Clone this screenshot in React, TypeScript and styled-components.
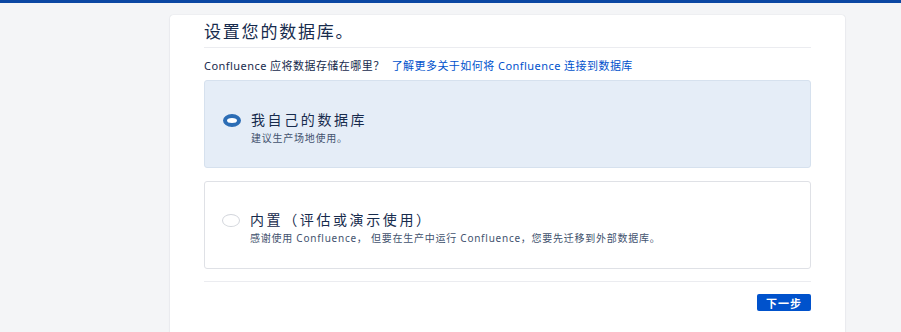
import styled, { createGlobalStyle } from "styled-components";

const GlobalStyle = createGlobalStyle`
  html, body {
    margin: 0;
    padding: 0;
    background: #f4f5f7;
    font-family: "Noto Sans", "Noto Sans CJK SC", sans-serif;
    color: #172b4d;
  }
`;

interface OptionProps {
  $selected?: boolean;
}

const options = [
  {
    id: "custom",
    title: "我自己的数据库",
    desc: "建议生产场地使用。",
    selected: true,
  },
  {
    id: "embedded",
    title: "内置（评估或演示使用）",
    desc: "感谢使用 Confluence， 但要在生产中运行 Confluence，您要先迁移到外部数据库。",
    selected: false,
  },
];

const App = () => {
  return (
    <>
      <GlobalStyle />
      <TopBar />
      <Page>
        <Card>
          <Title>设置您的数据库。</Title>
          <Question>
            Confluence 应将数据存储在哪里？
            <HelpLink href="#">了解更多关于如何将 Confluence 连接到数据库</HelpLink>
          </Question>
          <OptionList>
            {options.map((opt) => (
              <Option key={opt.id} $selected={opt.selected}>
                <Radio $selected={opt.selected} />
                <OptionText>
                  <OptionTitle>{opt.title}</OptionTitle>
                  <OptionDesc>{opt.desc}</OptionDesc>
                </OptionText>
              </Option>
            ))}
          </OptionList>
          <Footer>
            <NextButton>下一步</NextButton>
          </Footer>
        </Card>
      </Page>
    </>
  );
};

const TopBar = styled.div`
  height: 3px;
  background-color: #0b47a3;
`;

const Page = styled.div`
  padding: 12px 0 0 170px;
  height: 329px;
  box-sizing: border-box;
  overflow: hidden;
`;

const Card = styled.div`
  width: 675px;
  height: 340px;
  box-sizing: border-box;
  padding: 0 34px;
  background-color: #fff;
  border-radius: 3px;
  box-shadow: 0 0 1px rgba(9, 30, 66, 0.2), 0 1px 2px rgba(9, 30, 66, 0.08);
`;

const Title = styled.h1`
  margin: 0;
  padding: 7px 0 5px;
  font-size: 17px;
  line-height: 20px;
  font-weight: 400;
  letter-spacing: 1.8px;
  border-bottom: 1px solid #ebecf0;
`;

const Question = styled.p`
  margin: 10px 0 0;
  font-size: 11px;
  line-height: 16px;
  letter-spacing: 0.45px;
  color: #172b4d;
`;

const HelpLink = styled.a`
  margin-left: 7px;
  color: #0052cc;
  text-decoration: none;
`;

const OptionList = styled.div`
  display: flex;
  flex-direction: column;
  gap: 13px;
  margin-top: 6px;
`;

const Option = styled.div<OptionProps>`
  display: flex;
  align-items: flex-start;
  height: 88px;
  box-sizing: border-box;
  padding: ${(p) => (p.$selected ? "30px 18px 0" : "29px 17px 0")};
  background-color: ${(p) => (p.$selected ? "#e5edf7" : "#fff")};
  border: 1px solid ${(p) => (p.$selected ? "#d6e1ee" : "#dfe1e6")};
  border-radius: 3px;
`;

const Radio = styled.span<OptionProps>`
  flex: none;
  width: 18px;
  height: 13px;
  margin-top: 3px;
  margin-right: 10px;
  box-sizing: border-box;
  border-radius: 50%;
  background-color: #fff;
  border: ${(p) => (p.$selected ? "4px solid #2c6db5" : "1.5px solid #d3d6dc")};
`;

const OptionText = styled.div`
  display: flex;
  flex-direction: column;
  gap: 2px;
`;

const OptionTitle = styled.div`
  font-size: 14px;
  line-height: 18px;
  letter-spacing: 2.6px;
  color: #172b4d;
`;

const OptionDesc = styled.div`
  font-size: 10px;
  line-height: 14px;
  letter-spacing: 0.75px;
  color: #42526e;
`;

const Footer = styled.div`
  display: flex;
  justify-content: flex-end;
  margin-top: 12px;
  padding-top: 12px;
  border-top: 1px solid #ebecf0;
`;

const NextButton = styled.button`
  width: 54px;
  height: 17px;
  padding: 0;
  border: none;
  border-radius: 2px;
  background-color: #0052cc;
  color: #fff;
  font-family: "Noto Sans", "Noto Sans CJK SC", sans-serif;
  font-size: 11px;
  font-weight: 700;
  letter-spacing: 1px;
  cursor: pointer;
`;

export default App;
